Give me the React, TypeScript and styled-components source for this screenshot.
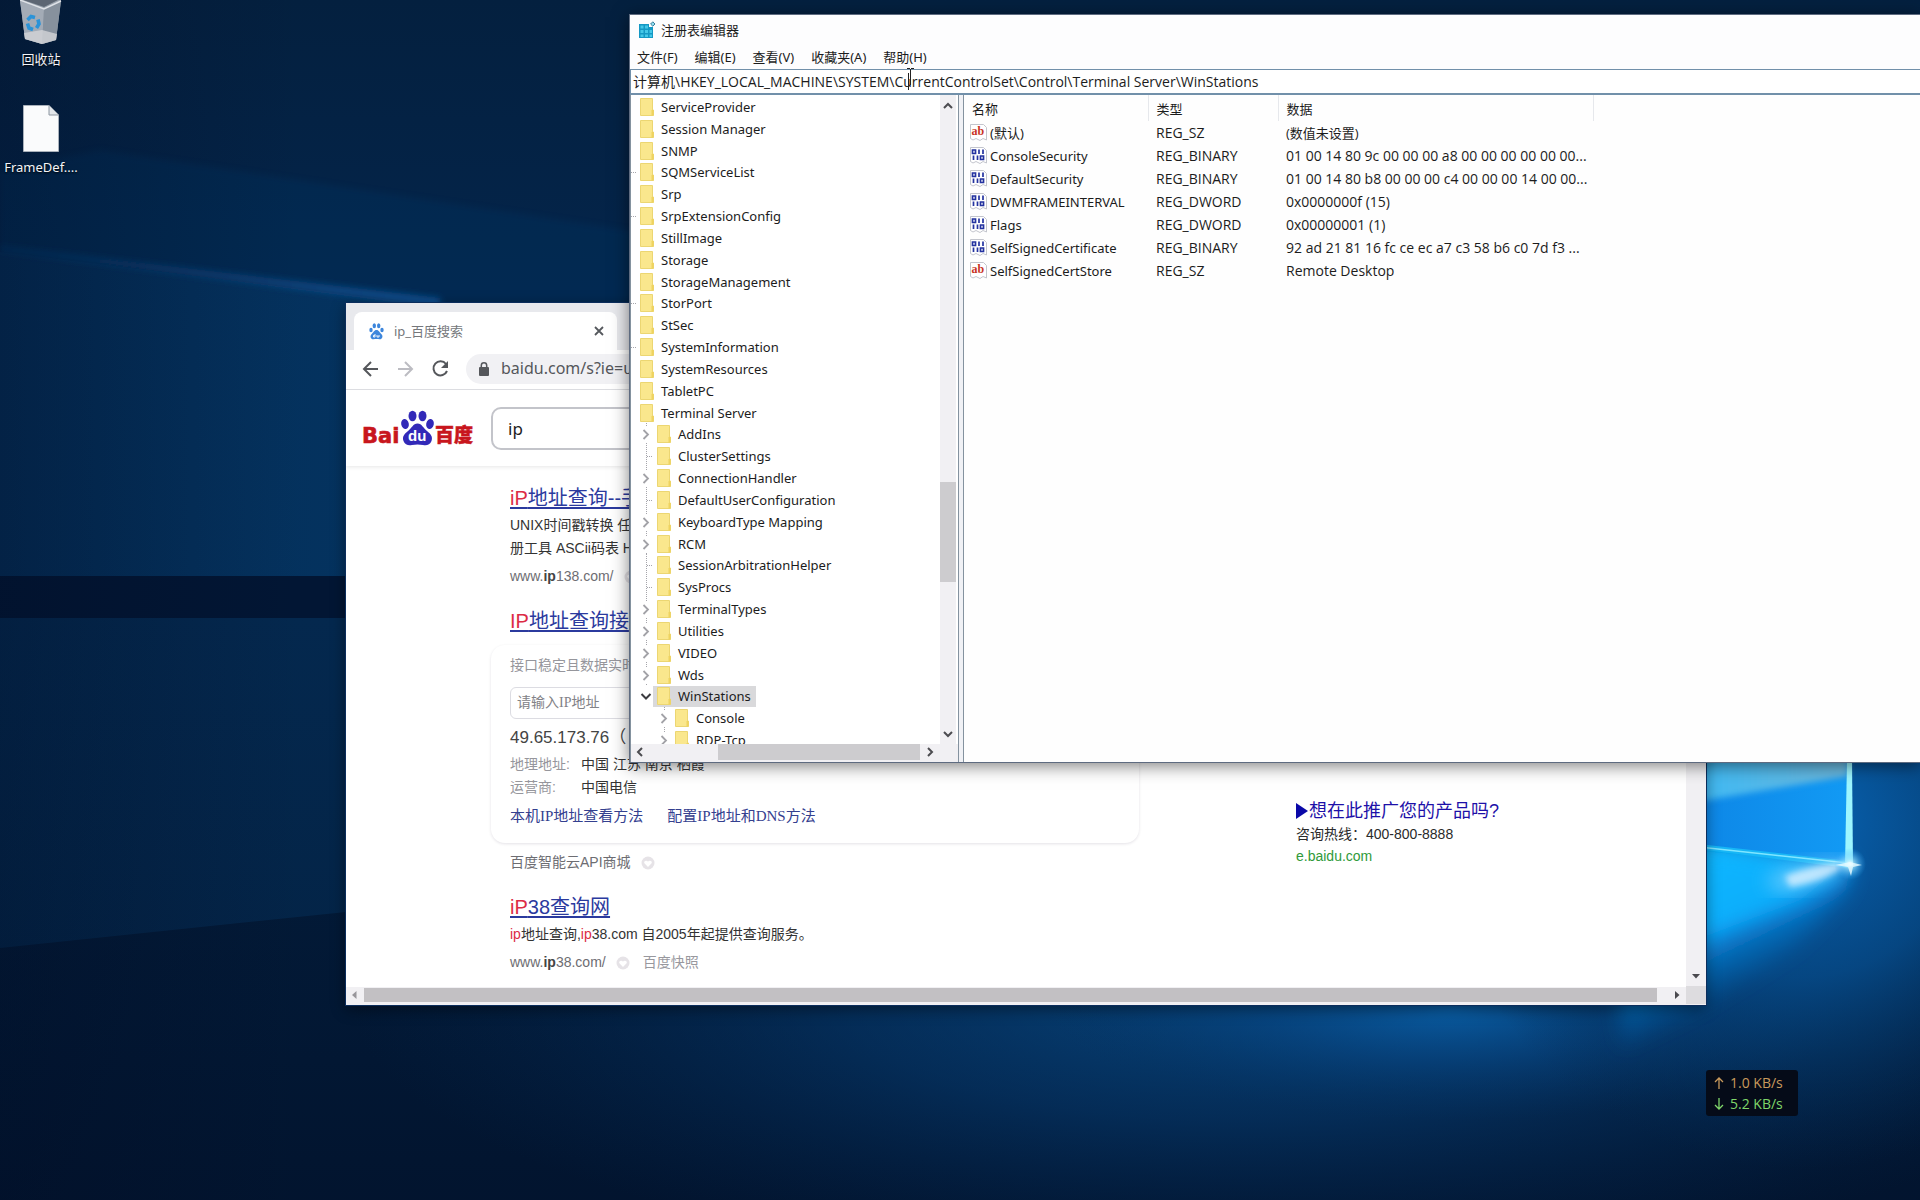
import React from "react";
import styled, { createGlobalStyle } from "styled-components";

const uiFont = '"Noto Sans", "Noto Sans CJK SC", sans-serif';
const wideFont = '"Open Sans", "Noto Sans CJK SC", sans-serif';
const pageFont = '"Liberation Sans", "Noto Sans CJK SC", sans-serif';
const serifFont = '"Liberation Serif", "Noto Sans CJK SC", serif';

const GlobalStyle = createGlobalStyle`
  * { box-sizing: border-box; }
  body { margin: 0; background: #03142f; font-family: ${uiFont}; font-size: 13px; color: #1c1c1c; }
  button { border: 0; padding: 0; background: none; font: inherit; color: inherit; display: block; }
  svg { display: block; flex: none; }
  a { color: inherit; }
  ul { margin: 0; padding: 0; list-style: none; }
  h1, h2, p { margin: 0; font-weight: 400; }
`;

const Desktop = styled.main`
  position: relative;
  min-height: 100vh;
  overflow: hidden;
`;

const Backdrop = styled.svg`
  position: absolute;
  inset: 0;
  width: 100%;
  height: 100%;
`;

function Wallpaper() {
  return (
    <Backdrop viewBox="0 0 1920 1200" preserveAspectRatio="none" aria-hidden="true">
      <defs>
        <linearGradient id="top" x1="0" y1="0" x2="0" y2="1">
          <stop offset="0" stopColor="#04203f" />
          <stop offset="0.3" stopColor="#04264e" />
          <stop offset="1" stopColor="#04264f" />
        </linearGradient>
        <linearGradient id="mid" x1="0" y1="0" x2="1" y2="0">
          <stop offset="0" stopColor="#042c55" />
          <stop offset="0.3" stopColor="#04305b" />
          <stop offset="1" stopColor="#053766" />
        </linearGradient>
        <linearGradient id="low" x1="0" y1="0" x2="0" y2="1">
          <stop offset="0" stopColor="#04284e" />
          <stop offset="1" stopColor="#032142" />
        </linearGradient>
        <linearGradient id="base" x1="0" y1="0" x2="0" y2="1">
          <stop offset="0" stopColor="#031c3a" />
          <stop offset="0.6" stopColor="#021733" />
          <stop offset="1" stopColor="#02132d" />
        </linearGradient>
        <linearGradient id="ray" x1="0" y1="0" x2="1" y2="0">
          <stop offset="0" stopColor="#0b3f76" stopOpacity="0.5" />
          <stop offset="0.6" stopColor="#0b4680" stopOpacity="0.8" />
          <stop offset="1" stopColor="#0c4f90" />
        </linearGradient>
        <linearGradient id="edge" x1="0" y1="0" x2="1" y2="0">
          <stop offset="0" stopColor="#010b22" stopOpacity="0.3" />
          <stop offset="1" stopColor="#010b22" stopOpacity="0" />
        </linearGradient>
        <radialGradient id="floor">
          <stop offset="0" stopColor="#0a62ac" />
          <stop offset="0.45" stopColor="#074683" stopOpacity="0.75" />
          <stop offset="1" stopColor="#04305f" stopOpacity="0" />
        </radialGradient>
        <radialGradient id="glow">
          <stop offset="0" stopColor="#0864b4" />
          <stop offset="0.45" stopColor="#064a88" stopOpacity="0.9" />
          <stop offset="1" stopColor="#03284f" stopOpacity="0" />
        </radialGradient>
        <linearGradient id="pane" x1="0" y1="0" x2="1" y2="0">
          <stop offset="0" stopColor="#0d86e6" />
          <stop offset="1" stopColor="#129af4" />
        </linearGradient>
        <linearGradient id="glass" x1="0" y1="0" x2="1" y2="0">
          <stop offset="0" stopColor="#3cb9f5" />
          <stop offset="1" stopColor="#6cb8dd" />
        </linearGradient>
        <linearGradient id="flood" gradientUnits="userSpaceOnUse" x1="1730" y1="860" x2="1790" y2="985">
          <stop offset="0" stopColor="#0fb9ff" />
          <stop offset="0.4" stopColor="#0c98f2" stopOpacity="0.9" />
          <stop offset="1" stopColor="#07529c" stopOpacity="0" />
        </linearGradient>
        <radialGradient id="spark">
          <stop offset="0" stopColor="#ffffff" />
          <stop offset="0.3" stopColor="#9fe6ff" stopOpacity="0.7" />
          <stop offset="1" stopColor="#2aa8ff" stopOpacity="0" />
        </radialGradient>
        <filter id="soft" x="-10%" y="-30%" width="120%" height="160%"><feGaussianBlur stdDeviation="3" /></filter>
        <filter id="softer" x="-20%" y="-30%" width="140%" height="160%"><feGaussianBlur stdDeviation="10" /></filter>
      </defs>
      <rect width="1920" height="1200" fill="url(#top)" />
      <path d="M100 150 L640 232 L1920 420 L1920 600 L0 600 L0 170 Z" fill="#053463" opacity="0.3" filter="url(#soft)" />
      <path d="M0 252 L424 304 L640 340 L640 578 L0 576 Z" fill="url(#mid)" />
      <path d="M0 246 L440 298 L440 308 L0 251 Z" fill="url(#ray)" filter="url(#soft)" />
      <rect y="576" width="1920" height="42" fill="#021634" />
      <rect y="618" width="1920" height="582" fill="url(#low)" />
      <path d="M0 948 L346 912 L1920 760 L1920 1260 L0 1260 Z" fill="url(#base)" />
      <rect width="300" height="1200" fill="url(#edge)" />
      <ellipse cx="1250" cy="1000" rx="900" ry="270" fill="url(#floor)" opacity="0.6" />
      <ellipse cx="1450" cy="1010" rx="400" ry="110" fill="url(#floor)" opacity="0.85" />
      <ellipse cx="1800" cy="820" rx="360" ry="350" fill="url(#glow)" />
      <path d="M1620 830 L1852 864 L1846 890 L1796 945 L1700 1010 L1620 1050 Z" fill="url(#flood)" filter="url(#softer)" />
      <path d="M1630 845 L1845 864 L1800 900 L1630 965 Z" fill="#10b4ff" opacity="0.85" filter="url(#softer)" />
      <path d="M1690 760 H1848 V864 L1690 844 Z" fill="url(#pane)" />
      <path d="M1690 750 H1848 V776 L1690 803 Z" fill="url(#glass)" filter="url(#soft)" />
      <path d="M1690 843 L1848 861 L1848 868 L1690 848 Z" fill="#17b6f6" />
      <path d="M1690 846 L1848 863" stroke="#7fe6ff" strokeWidth="1.500" />
      <path d="M1847 760 L1852 760 L1853 866 L1845 866 Z" fill="#9df6ff" />
      <path d="M1765 880 Q1800 866 1850 861 Q1832 880 1780 889 Z" fill="#b9e4ff" opacity="0.7" filter="url(#softer)" />
      <path d="M1785 876 Q1815 864 1850 861 Q1832 880 1790 887 Z" fill="#e2f3ff" opacity="0.75" filter="url(#soft)" />
      <circle cx="1850" cy="864" r="16" fill="url(#spark)" />
      <path d="M1835 865 L1850 862 L1862 865 L1853 867 L1851 876 L1848 867 Z" fill="#e8fbff" opacity="0.8" />
    </Backdrop>
  );
}

/* Desktop shortcuts */

const Shortcuts = styled.nav`
  position: absolute;
  top: 0;
  left: 0;
  width: 82px;
  display: flex;
  flex-direction: column;
  gap: 36px;
`;

const Shortcut = styled.button`
  display: flex;
  flex-direction: column;
  align-items: center;
  width: 100%;
  gap: 5px;
  color: #f2f4f8;
  line-height: 20px;
  text-shadow: 0 1px 2px #000;
`;

function RecycleBin() {
  return (
    <svg width="42" height="44" viewBox="0 0 42 44" aria-hidden="true">
      <path d="M0 0 L41 0 L36 40 L22 44 L5 39 Z" fill="#9aa3ae" />
      <path d="M0 0 L24 9 L22 44 L5 39 Z" fill="#a3abb6" />
      <path d="M24 9 L41 1 L36 40 L22 44 Z" fill="#87919d" />
      <path d="M3 0 H38 L24 7 Z" fill="#5d6673" />
      <path d="M4 33 L22 30 L37 34 L36 40 L22 44 L5 39 Z" fill="#d3d4d8" opacity="0.8" />
      <path d="M0 0 L24 9 L41 1" fill="none" stroke="#dfe2e7" strokeWidth="1.400" />
      <g fill="none" stroke="#2b93d8" strokeWidth="3.600">
        <path d="M7.500 20 L11 16.500 L15 17.500" />
        <path d="M18 19.500 L19 24 L16.500 28" />
        <path d="M13 29.500 L9 28 L7.500 23.500" />
      </g>
    </svg>
  );
}

function BlankFile() {
  return (
    <svg width="36" height="47" viewBox="0 0 36 47" aria-hidden="true">
      <path d="M0.500 0.500 H26 L35.500 10 V46.500 H0.500 Z" fill="#fafbfc" stroke="#a9b1bb" />
      <path d="M26 0.500 V10 H35.500" fill="#e3e6ea" stroke="#8d96a1" />
    </svg>
  );
}

/* Browser window */

const BrowserWindow = styled.section`
  position: absolute;
  top: 303px;
  left: 346px;
  right: 214px;
  height: 702px;
  display: flex;
  flex-direction: column;
  background: #fff;
  box-shadow: 0 0 0 1px #0b2d5c, 0 4px 14px rgba(0, 0, 0, 0.45);
`;

const TabStrip = styled.div`
  height: 47px;
  padding: 9px 8px 0;
  background: #e8e9ed;
`;

const Tab = styled.div`
  display: flex;
  align-items: center;
  width: 263px;
  height: 38px;
  padding: 0 10px 0 15px;
  gap: 10px;
  border-radius: 8px 8px 0 0;
  background: #fff;
  color: #75777b;
`;

const TabTitle = styled.span`
  flex: 1;
  padding-bottom: 2px;
`;

const CloseTab = styled.button`
  width: 16px;
  height: 16px;
  color: #55585d;
  svg { margin: 3px; }
`;

const Toolbar = styled.div`
  display: flex;
  align-items: center;
  height: 40px;
  padding: 0 0 2px 15px;
  gap: 15px;
  border-bottom: 1px solid #dcdde1;
`;

const ToolButton = styled.button<{ $dim?: boolean }>`
  width: 20px;
  height: 20px;
  color: ${(p) => (p.$dim ? "#bcbcc2" : "#55575b")};
`;

const Omnibox = styled.label`
  display: flex;
  align-items: center;
  flex: 1;
  height: 30px;
  margin-right: 12px;
  padding: 0 13px;
  gap: 12px;
  border-radius: 15px;
  background: #f1f1f4;
  input {
    flex: 1;
    border: 0;
    padding: 0 0 2px;
    outline: 0;
    background: none;
    font: 16px ${uiFont};
    color: #55575b;
  }
`;

const Viewport = styled.div`
  display: flex;
  flex: 1;
  min-height: 0;
`;

const Page = styled.div`
  flex: 1;
  min-width: 0;
  overflow: hidden;
  font-family: ${pageFont};
  font-size: 14px;
  line-height: 23px;
  color: #333;
`;

const PageHeader = styled.header`
  display: flex;
  align-items: center;
  height: 76px;
  padding-left: 16px;
  gap: 17px;
  box-shadow: 0 1px 4px rgba(0, 0, 0, 0.1);
`;

const SearchBox = styled.input`
  width: 640px;
  height: 43px;
  border: 2px solid #c3c4ca;
  border-radius: 10px;
  padding: 0 15px;
  outline: 0;
  font: 17px ${uiFont};
  color: #222;
`;

const Columns = styled.div`
  display: flex;
  padding-left: 145px;
  gap: 157px;
`;

const Results = styled.div`
  display: flex;
  flex-direction: column;
  width: 648px;
  padding-top: 20px;
  gap: 21px;
`;

const Result = styled.article`
  padding: 0 19px;
`;

const ResultTitle = styled.h2`
  font-size: 20px;
  line-height: 24px;
  margin-bottom: 4px;
  white-space: nowrap;
  a { color: #2b3a9e; text-underline-offset: 2px; }
`;

const Hit = styled.em`
  font-style: normal;
  color: #dc2c45;
`;

const SourceLine = styled.p`
  display: flex;
  align-items: center;
  margin-top: 5px;
  gap: 10px;
  color: #6d6d72;
  a { text-decoration: none; }
  b { color: #444; }
`;

const Muted = styled.a`
  color: #98989e;
  margin-left: 3px;
`;

const Card = styled.div`
  margin: 12px -19px 8px;
  padding: 9px 19px 15px;
  border-radius: 14px;
  box-shadow: 0 1px 3px rgba(30, 20, 60, 0.12);
  white-space: nowrap;
  color: #96969c;
`;

const IpInput = styled.input`
  display: block;
  width: 420px;
  height: 32px;
  margin: 10px 0 7px;
  padding: 0 6px;
  border: 1px solid #dcdce2;
  border-radius: 6px;
  font: 14px ${serifFont};
  &::placeholder { color: #828287; opacity: 1; }
`;

const IpValue = styled.p`
  margin-bottom: 3px;
  font-size: 17px;
  line-height: 24px;
  color: #444;
`;

const Fact = styled.dl`
  display: flex;
  margin: 0;
  dt { width: 71px; }
  dd { margin: 0; color: #333; }
`;

const HelpLinks = styled.p`
  display: flex;
  margin-top: 6px;
  gap: 24px;
  font: 15px/23px ${serifFont};
  color: #34408f;
  a { text-decoration: none; }
`;

const Promo = styled.aside`
  padding-top: 333px;
  line-height: 22px;
  white-space: nowrap;
  h2 { font-size: 18px; line-height: 24px; color: #1d10a8; }
  h2 a { display: flex; align-items: center; text-decoration: none; gap: 1px; }
  p { color: #2a2a2a; }
  p a { color: #2f9a3a; text-decoration: none; }
`;

const PageScrollY = styled.div`
  display: flex;
  flex-direction: column;
  justify-content: flex-end;
  align-items: center;
  width: 20px;
  padding-bottom: 3px;
  background: #f1f0f3;
`;

const PageScrollX = styled.div`
  display: flex;
  align-items: center;
  height: 18px;
  padding-bottom: 2px;
  background: #f1f0f3;
`;

const ScrollCap = styled.button`
  display: flex;
  align-items: center;
  justify-content: center;
  flex: none;
  width: 18px;
  height: 16px;
  color: #4a4a4f;
`;

const PageThumbX = styled.div`
  flex: 1;
  height: 14px;
  margin-right: 11px;
  background: #c2c0c3;
`;

const Corner = styled.div`
  width: 20px;
  height: 18px;
  background: #dddcdf;
`;

function Paw({ size }: { size: number }) {
  return (
    <svg width={size} height={size + 2} viewBox="0 0 15 17" aria-hidden="true">
      <g fill="#3d86dc">
        <ellipse cx="2" cy="7" rx="1.700" ry="2.300" />
        <ellipse cx="5.300" cy="2.800" rx="1.700" ry="2.500" />
        <ellipse cx="9.700" cy="2.800" rx="1.700" ry="2.500" />
        <ellipse cx="13" cy="7" rx="1.700" ry="2.300" />
        <path d="M7.500 7 C10 7 10.500 9.500 12.500 11.300 C14.600 13.500 13 16.600 10.500 16.300 C8.500 16 6.500 16 4.500 16.300 C2 16.600 0.400 13.500 2.500 11.300 C4.500 9.500 5 7 7.500 7 Z" />
      </g>
      <path d="M6 11 V14 H4.500 V12.400 H6 M8 12 V14 H10 V12" fill="none" stroke="#fff" strokeWidth="0.900" />
    </svg>
  );
}

function BaiduLogo() {
  return (
    <svg width="112" height="38" viewBox="0 0 112 38" role="img" aria-label="Bai du 百度">
      <text x="0" y="34" fontFamily="DejaVu Sans" fontWeight="700" fontSize="21" fill="#c8161d" stroke="#c8161d" strokeWidth="0.600">Bai</text>
      <text x="73" y="33" fontFamily="Noto Sans CJK SC" fontWeight="900" fontSize="19" fill="#c8161d" stroke="#c8161d" strokeWidth="0.500">百度</text>
      <g fill="#3229b8">
        <ellipse cx="43" cy="15" rx="3.800" ry="5" transform="rotate(-12 43 15)" />
        <ellipse cx="50.500" cy="7" rx="4" ry="5.200" />
        <ellipse cx="60.500" cy="7" rx="4" ry="5.200" />
        <ellipse cx="68" cy="15" rx="3.800" ry="5" transform="rotate(12 68 15)" />
        <path d="M55.500 14.500 C60 14.500 61 19 65 22 C69 25 71 28 69.500 32 C68 36 64.500 36.800 61 36 C57 35.200 54 35.200 50 36 C46.500 36.800 43 36 41.500 32 C40 28 42 25 46 22 C50 19 51 14.500 55.500 14.500 Z" />
      </g>
      <text x="46" y="32" fontFamily="Liberation Sans" fontWeight="700" fontSize="15" fill="#fff">du</text>
    </svg>
  );
}

function Badge() {
  return (
    <svg width="14" height="14" viewBox="0 0 14 14" aria-hidden="true">
      <circle cx="7" cy="7" r="6.500" fill="#e6e3e7" />
      <path d="M7 11 L3.400 7.300 C2.400 5.600 4.700 3.500 7 5.400 C9.300 3.500 11.600 5.600 10.600 7.300 Z" fill="#fff" />
    </svg>
  );
}

function Triangle({ dir, color }: { dir: "left" | "right" | "down"; color?: string }) {
  const d = { left: "M6.500 1 V9 L2 5 Z", right: "M3 1 V9 L7.500 5 Z", down: "M1 3 H9 L5 7.500 Z" }[dir];
  return (
    <svg width="10" height="10" viewBox="0 0 10 10" aria-hidden="true">
      <path d={d} fill={color ?? "currentColor"} />
    </svg>
  );
}

function Browser() {
  return (
    <BrowserWindow aria-label="ip_百度搜索">
      <TabStrip>
        <Tab>
          <Paw size={15} />
          <TabTitle>ip_百度搜索</TabTitle>
          <CloseTab aria-label="Close tab">
            <svg width="10" height="10" viewBox="0 0 10 10" stroke="currentColor" strokeWidth="1.800"><path d="M1 1 L9 9 M9 1 L1 9" /></svg>
          </CloseTab>
        </Tab>
      </TabStrip>
      <Toolbar>
        <ToolButton aria-label="Back">
          <svg width="20" height="20" viewBox="0 0 20 20" fill="none" stroke="currentColor" strokeWidth="2"><path d="M17 10 H3 M10 3 L3 10 L10 17" /></svg>
        </ToolButton>
        <ToolButton aria-label="Forward" $dim>
          <svg width="20" height="20" viewBox="0 0 20 20" fill="none" stroke="currentColor" strokeWidth="2"><path d="M2 10 H16 M9 3 L16 10 L9 17" /></svg>
        </ToolButton>
        <ToolButton aria-label="Reload">
          <svg width="20" height="20" viewBox="0 0 20 20" fill="none" stroke="currentColor" strokeWidth="2"><path d="M15 5 A7 7 0 1 0 16 12" /><path d="M17 2 V9 H10 Z" fill="currentColor" stroke="none" /></svg>
        </ToolButton>
        <Omnibox>
          <svg width="10" height="14" viewBox="0 0 10 14" aria-hidden="true">
            <rect y="5" width="10" height="9" rx="1" fill="#55575b" />
            <path d="M2.300 5 V3.500 A2.700 2.700 0 0 1 7.700 3.500 V5" fill="none" stroke="#55575b" strokeWidth="1.500" />
          </svg>
          <input aria-label="Address" defaultValue="baidu.com/s?ie=u" />
        </Omnibox>
      </Toolbar>
      <Viewport>
        <Page>
          <PageHeader>
            <BaiduLogo />
            <SearchBox aria-label="搜索" defaultValue="ip" />
          </PageHeader>
          <Columns>
            <Results>
              <Result>
                <ResultTitle><a href="#ip138"><Hit>iP</Hit>地址查询--手</a></ResultTitle>
                <p>UNIX时间戳转换 任</p>
                <p>册工具 ASCii码表 H</p>
                <SourceLine><a href="#ip138">www.<b>ip</b>138.com/</a><Badge /></SourceLine>
              </Result>
              <Result>
                <ResultTitle><a href="#api"><Hit>IP</Hit>地址查询接</a></ResultTitle>
                <Card>
                  <p>接口稳定且数据实时</p>
                  <IpInput aria-label="IP地址" placeholder="请输入IP地址" />
                  <IpValue>49.65.173.76（</IpValue>
                  <Fact><dt>地理地址:</dt><dd>中国 江苏 南京 栖霞</dd></Fact>
                  <Fact><dt>运营商:</dt><dd>中国电信</dd></Fact>
                  <HelpLinks><a href="#view">本机IP地址查看方法</a><a href="#dns">配置IP地址和DNS方法</a></HelpLinks>
                </Card>
                <SourceLine><a href="#cloud">百度智能云API商城</a><Badge /></SourceLine>
              </Result>
              <Result>
                <ResultTitle><a href="#ip38"><Hit>iP</Hit>38查询网</a></ResultTitle>
                <p><Hit>ip</Hit>地址查询,<Hit>ip</Hit>38.com 自2005年起提供查询服务。</p>
                <SourceLine><a href="#ip38">www.<b>ip</b>38.com/</a><Badge /><Muted href="#cache">百度快照</Muted></SourceLine>
              </Result>
            </Results>
            <Promo>
              <h2><a href="#promo"><svg width="12" height="16" viewBox="0 0 12 16" aria-hidden="true"><path d="M0 0 V16 L12 8 Z" fill="#0a08a8" /></svg>想在此推广您的产品吗?</a></h2>
              <p>咨询热线：400-800-8888</p>
              <p><a href="#e">e.baidu.com</a></p>
            </Promo>
          </Columns>
        </Page>
        <PageScrollY><ScrollCap aria-label="Scroll down"><Triangle dir="down" /></ScrollCap></PageScrollY>
      </Viewport>
      <PageScrollX>
        <ScrollCap aria-label="Scroll left"><Triangle dir="left" color="#98969b" /></ScrollCap>
        <PageThumbX />
        <ScrollCap aria-label="Scroll right"><Triangle dir="right" /></ScrollCap>
        <Corner />
      </PageScrollX>
    </BrowserWindow>
  );
}

/* Registry editor window */

const RegWindow = styled.section`
  position: absolute;
  top: 14px;
  left: 629px;
  right: 0;
  height: 749px;
  display: flex;
  flex-direction: column;
  border: solid #5e6b80;
  border-width: 1px 0 1px 1px;
  background: #fdfdfe;
  box-shadow: 0 3px 16px rgba(0, 0, 0, 0.5);
`;

const TitleBar = styled.header`
  display: flex;
  align-items: center;
  height: 31px;
  padding: 0 0 2px 9px;
  gap: 5px;
  h1 { font-size: 13px; line-height: 20px; }
`;

const MenuBar = styled.nav`
  display: flex;
  align-items: center;
  height: 23px;
  padding: 0 0 2px 7px;
  gap: 17px;
`;

const PathBar = styled.label`
  position: relative;
  display: flex;
  height: 26px;
  border: solid #7190aa;
  border-width: 1px 0 2px 1px;
  background: #fff;
  input {
    flex: 1;
    border: 0;
    outline: 0;
    padding: 0 2px 1px;
    background: none;
    font: 14px ${wideFont};
    color: inherit;
  }
`;

const IBeam = styled.svg`
  position: absolute;
  left: 274px;
  top: -2px;
`;

const Panes = styled.div`
  display: flex;
  flex: 1;
  min-height: 0;
  background: #f0f1f5;
  gap: 4px;
`;

const TreePane = styled.div`
  display: grid;
  grid-template: minmax(0, 1fr) 18px / minmax(0, 1fr) 18px;
  width: 329px;
  border: solid #84929f;
  border-width: 0 1px 0 1px;
  background: #fff;
`;

const TreeClip = styled.div`
  overflow: hidden;
  padding-top: 1px;
`;

const Tree = styled.ul`
  display: grid;
  grid-auto-rows: minmax(0, 1fr);
  height: 655px;
`;

const TreeRow = styled.li<{ $level: number }>`
  display: flex;
  align-items: center;
  padding-left: ${(p) => [0, 8, 26][p.$level]}px;
`;

const Node = styled.button<{ $selected?: boolean }>`
  display: flex;
  align-items: center;
  height: 100%;
  padding: 0 5px 0 4px;
  gap: 7px;
  line-height: 20px;
  white-space: nowrap;
  background: ${(p) => (p.$selected ? "#d9d9db" : "transparent")};
`;

const TreeScrollY = styled.div`
  display: flex;
  flex-direction: column;
  align-items: center;
  padding: 3px 0 2px;
  background: #f1f0f3;
  border-right: 2px solid #fff;
`;

const TreeThumbY = styled.div`
  width: 100%;
  height: 100px;
  margin: 368px 0 auto;
  background: #cdcccf;
`;

const TreeScrollX = styled.div`
  grid-column: 1 / -1;
  display: flex;
  align-items: center;
  padding: 0 19px 2px 0;
  background: #f1f0f3;
`;

const TreeThumbX = styled.div`
  width: 202px;
  height: 100%;
  margin: 0 auto 0 69px;
  background: #cdcccf;
`;

const ValuePane = styled.div`
  flex: 1;
  min-width: 0;
  border-left: 1px solid #84929f;
  background: #fefefe;
`;

const ValueTable = styled.table`
  width: 629px;
  table-layout: fixed;
  border-collapse: collapse;
  th, td { text-align: left; font-weight: 400; white-space: nowrap; }
  th { height: 26px; padding: 0 0 0 8px; border-right: 1px solid #e6e8ec; }
  td { height: 23px; padding: 0 0 0 8px; line-height: 20px; }
  td:first-child { padding-left: 6px; }
`;

const Reading = styled.td<{ $size: number }>`
  font-family: ${wideFont};
  font-size: ${(p) => p.$size}px;
`;

const ValueName = styled.div`
  display: flex;
  align-items: center;
  gap: 3px;
`;

const Col = styled.col<{ $w: number }>`
  width: ${(p) => p.$w}px;
`;

function RegIcon() {
  return (
    <svg width="17" height="18" viewBox="0 0 17 18" aria-hidden="true">
      <path d="M0 3 H10 V6 H14 V17 H0 Z" fill="#1598c4" />
      <path d="M1.500 4.500 H4.500 V7.500 H1.500 Z M6 4.500 H9 V7.500 H6 Z M1.500 9 H4.500 V12 H1.500 Z M6 9 H9 V12 H6 Z M10.500 9 H13 V12 H10.500 Z M1.500 13.500 H4.500 V16 H1.500 Z M6 13.500 H9 V16 H6 Z M10.500 13.500 H13 V16 H10.500 Z" fill="#45c8e8" />
      <path d="M13.800 0.800 L16 3 L13.800 5.200 L11.600 3 Z" fill="#8fdcf0" stroke="#3a7f9c" strokeWidth="1" />
    </svg>
  );
}

function Folder() {
  return (
    <svg width="14" height="18" viewBox="0 0 14 18" aria-hidden="true">
      <path d="M0.500 0.500 H12.500 V12 H13.500 V17.500 H0.500 Z" fill="#fae78d" stroke="#ecd672" />
      <path d="M11.500 12 H13.500 V17.500 H11.500 Z" fill="#efd35f" />
    </svg>
  );
}

const dots = { stroke: "#a5a5ab", strokeDasharray: "1 1", fill: "none" };

function Branch({ kind }: { kind: Kind }) {
  return (
    <svg width="14" height="22" viewBox="0 0 14 22" aria-hidden="true">
      {kind === "leaf" && <path d="M7.500 0 V22 M8 11.500 H14" {...dots} />}
      {kind === "closed" && (
        <>
          <path d="M7.500 0 V3 M7.500 20 V22" {...dots} />
          <path d="M4.500 7 L9 11.500 L4.500 16" fill="none" stroke="#a2a2a7" strokeWidth="1.800" />
        </>
      )}
      {kind === "open" && <path d="M2.500 9 L7 13.500 L11.500 9" fill="none" stroke="#3c3c40" strokeWidth="2" />}
    </svg>
  );
}

function Stub({ visible }: { visible: boolean }) {
  return (
    <svg width="5" height="22" viewBox="0 0 5 22" aria-hidden="true">
      {visible && <path d="M0 11.500 H5" {...dots} />}
    </svg>
  );
}

function Chevron({ dir }: { dir: "up" | "down" | "left" | "right" }) {
  const d = { up: "M2 8 L6 4 L10 8", down: "M2 4 L6 8 L10 4", left: "M8 2 L4 6 L8 10", right: "M4 2 L8 6 L4 10" }[dir];
  return (
    <svg width="12" height="12" viewBox="0 0 12 12" aria-hidden="true">
      <path d={d} fill="none" stroke="#4c4c50" strokeWidth="2" />
    </svg>
  );
}

function ValueIcon({ text }: { text: boolean }) {
  return (
    <svg width="17" height="17" viewBox="0 0 17 17" aria-hidden="true">
      <path d="M0.500 0.500 H13.500 L16.500 3.500 V16 L13 14.500 L10 16.500 L6 14.500 L3 16 L0.500 14.500 Z" fill="#fff" stroke="#c3c5cd" />
      {text ? (
        <text x="1.500" y="11" fontFamily="Liberation Serif" fontWeight="700" fontSize="12" fill="#c83224">ab</text>
      ) : (
        <path d="M2.500 3 H5.500 V6.500 H2.500 Z M9 2.500 V7 M13 2.500 V7 M3.500 8.500 V13 M7.500 8.500 V13 M10.500 9 H13.500 V12.500 H10.500 Z" fill="none" stroke="#2433a0" strokeWidth="1.700" />
      )}
    </svg>
  );
}

type Kind = "leaf" | "closed" | "open";

const tree: { name: string; level: number; kind: Kind }[] = [
  ...[
    ["ServiceProvider"], ["Session Manager"], ["SNMP"], ["SQMServiceList", "leaf"], ["Srp"],
    ["SrpExtensionConfig", "leaf"], ["StillImage"], ["Storage"], ["StorageManagement"], ["StorPort", "leaf"],
    ["StSec"], ["SystemInformation", "leaf"], ["SystemResources"], ["TabletPC"],
  ].map(([name, kind]) => ({ name, level: 0, kind: (kind ?? "closed") as Kind })),
  { name: "Terminal Server", level: 0, kind: "open" },
  { name: "AddIns", level: 1, kind: "closed" },
  { name: "ClusterSettings", level: 1, kind: "leaf" },
  { name: "ConnectionHandler", level: 1, kind: "closed" },
  { name: "DefaultUserConfiguration", level: 1, kind: "leaf" },
  { name: "KeyboardType Mapping", level: 1, kind: "closed" },
  { name: "RCM", level: 1, kind: "closed" },
  { name: "SessionArbitrationHelper", level: 1, kind: "leaf" },
  { name: "SysProcs", level: 1, kind: "leaf" },
  { name: "TerminalTypes", level: 1, kind: "closed" },
  { name: "Utilities", level: 1, kind: "closed" },
  { name: "VIDEO", level: 1, kind: "closed" },
  { name: "Wds", level: 1, kind: "closed" },
  { name: "WinStations", level: 1, kind: "open" },
  { name: "Console", level: 2, kind: "closed" },
  { name: "RDP-Tcp", level: 2, kind: "closed" },
];

const values = [
  ["(默认)", "REG_SZ", "(数值未设置)"],
  ["ConsoleSecurity", "REG_BINARY", "01 00 14 80 9c 00 00 00 a8 00 00 00 00 00 00..."],
  ["DefaultSecurity", "REG_BINARY", "01 00 14 80 b8 00 00 00 c4 00 00 00 14 00 00..."],
  ["DWMFRAMEINTERVAL", "REG_DWORD", "0x0000000f (15)"],
  ["Flags", "REG_DWORD", "0x00000001 (1)"],
  ["SelfSignedCertificate", "REG_BINARY", "92 ad 21 81 16 fc ce ec a7 c3 58 b6 c0 7d f3 ..."],
  ["SelfSignedCertStore", "REG_SZ", "Remote Desktop"],
];

const menus = ["文件(F)", "编辑(E)", "查看(V)", "收藏夹(A)", "帮助(H)"];

function RegistryEditor() {
  return (
    <RegWindow aria-label="注册表编辑器">
      <TitleBar><RegIcon /><h1>注册表编辑器</h1></TitleBar>
      <MenuBar>{menus.map((m) => <button key={m}>{m}</button>)}</MenuBar>
      <PathBar>
        <input aria-label="路径" defaultValue="计算机\HKEY_LOCAL_MACHINE\SYSTEM\CurrentControlSet\Control\Terminal Server\WinStations" />
        <IBeam width="10" height="23" viewBox="0 0 10 23" aria-hidden="true">
          <path d="M2 0.500 H5 M6 0.500 H9 M5.500 1 V17 M3.500 5 V22" fill="none" stroke="#222" />
        </IBeam>
      </PathBar>
      <Panes>
        <TreePane>
          <TreeClip>
            <Tree>
              {tree.map((n) => (
                <TreeRow key={n.name} $level={n.level}>
                  {n.level === 0 ? <Stub visible={n.kind === "leaf"} /> : <Branch kind={n.kind} />}
                  <Node $selected={n.name === "WinStations"}><Folder />{n.name}</Node>
                </TreeRow>
              ))}
            </Tree>
          </TreeClip>
          <TreeScrollY>
            <ScrollCap aria-label="Scroll up"><Chevron dir="up" /></ScrollCap>
            <TreeThumbY />
            <ScrollCap aria-label="Scroll down"><Chevron dir="down" /></ScrollCap>
          </TreeScrollY>
          <TreeScrollX>
            <ScrollCap aria-label="Scroll left"><Chevron dir="left" /></ScrollCap>
            <TreeThumbX />
            <ScrollCap aria-label="Scroll right"><Chevron dir="right" /></ScrollCap>
          </TreeScrollX>
        </TreePane>
        <ValuePane>
          <ValueTable>
            <colgroup><Col $w={184} /><Col $w={130} /><Col $w={315} /></colgroup>
            <thead><tr><th>名称</th><th>类型</th><th>数据</th></tr></thead>
            <tbody>
              {values.map(([name, type, data]) => (
                <tr key={name}>
                  <td><ValueName><ValueIcon text={type === "REG_SZ"} />{name}</ValueName></td>
                  <Reading $size={14}>{type}</Reading>
                  <Reading $size={data.startsWith("(") ? 13 : 14}>{data}</Reading>
                </tr>
              ))}
            </tbody>
          </ValueTable>
        </ValuePane>
      </Panes>
    </RegWindow>
  );
}

/* Network speed widget */

const SpeedWidget = styled.aside`
  position: absolute;
  right: 122px;
  bottom: 84px;
  width: 92px;
  padding: 2px 8px;
  border-radius: 3px;
  background: #050b18;
  font: 14px/21px ${wideFont};
`;

const Speed = styled.p<{ $color: string }>`
  display: flex;
  align-items: center;
  gap: 6px;
  color: ${(p) => p.$color};
`;

export default function App() {
  return (
    <>
      <GlobalStyle />
      <Desktop>
        <Wallpaper />
        <Shortcuts aria-label="Desktop">
          <Shortcut><RecycleBin />回收站</Shortcut>
          <Shortcut><BlankFile />FrameDef....</Shortcut>
        </Shortcuts>
        <Browser />
        <RegistryEditor />
        <SpeedWidget>
          <Speed $color="#c99a5c">
            <svg width="10" height="12" viewBox="0 0 10 12" fill="none" stroke="currentColor" strokeWidth="1.300" aria-hidden="true"><path d="M5 12 V1 M1 5 L5 1 L9 5" /></svg>
            1.0 KB/s
          </Speed>
          <Speed $color="#7fd66a">
            <svg width="10" height="12" viewBox="0 0 10 12" fill="none" stroke="currentColor" strokeWidth="1.300" aria-hidden="true"><path d="M5 0 V11 M1 7 L5 11 L9 7" /></svg>
            5.2 KB/s
          </Speed>
        </SpeedWidget>
      </Desktop>
    </>
  );
}
